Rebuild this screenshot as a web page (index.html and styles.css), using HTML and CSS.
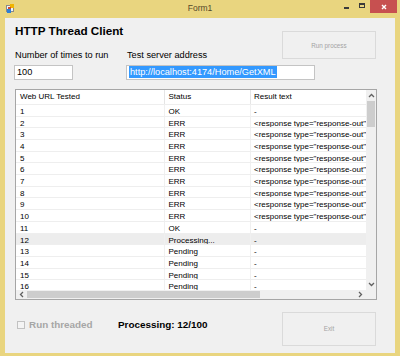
FILE: index.html
```html
<!DOCTYPE html>
<html lang="en">

<head>
    <meta charset="UTF-8">
    <meta name="viewport" content="width=device-width, initial-scale=1.0">
    <title>Form1</title>
    <link rel="stylesheet" href="styles.css">
</head>

<body>
    <div class="window">
        <div class="titlebar">
            <svg class="app-icon" width="9" height="9" viewBox="0 0 9 9">
                <rect x="0.5" y="1.5" width="7" height="6" fill="#f4f4f4" stroke="#8a8a8a"/>
                <rect x="4" y="0" width="4" height="4" fill="#f0b400"/>
                <rect x="2" y="3" width="3" height="2" fill="#d64a2a"/>
                <rect x="1" y="5" width="4" height="4" fill="#2d7fd6"/>
            </svg>
            <span class="title">Form1</span>
            <div class="controls">
                <span class="ctl ctl-min"></span>
                <span class="ctl ctl-max"></span>
                <span class="ctl-close">
                    <svg width="6" height="6" viewBox="0 0 6 6">
                        <path d="M1 1 L5 5 M5 1 L1 5" stroke="#fff" stroke-width="1.4"/>
                    </svg>
                </span>
            </div>
        </div>

        <div class="client">
            <div class="top">
                <h1>HTTP Thread Client</h1>
                <div class="fields">
                    <div class="field field-count">
                        <label for="count">Number of times to run</label>
                        <input type="text" id="count" class="textbox" value="100">
                    </div>
                    <div class="field field-url">
                        <label>Test server address</label>
                        <div class="textbox"><span class="selected">http://localhost:4174/Home/GetXML</span></div>
                    </div>
                </div>
                <button class="btn btn-run" disabled>Run process</button>
            </div>

            <div class="listview">
                <div class="list-body">
                    <div class="list-header">
                        <div class="cell c1">Web URL Tested</div>
                        <div class="cell c2">Status</div>
                        <div class="cell c3">Result text</div>
                    </div>
                    <div id="rows"></div>
                </div>
                <div class="vscroll">
                    <span class="arrow">
                        <svg width="7" height="5" viewBox="0 0 7 5"><path d="M1 4 L3.5 1.5 L6 4" fill="none" stroke="#606060" stroke-width="1.3"/></svg>
                    </span>
                    <span class="vthumb"></span>
                    <span class="vtrack"></span>
                    <span class="arrow">
                        <svg width="7" height="5" viewBox="0 0 7 5"><path d="M1 1 L3.5 3.5 L6 1" fill="none" stroke="#606060" stroke-width="1.3"/></svg>
                    </span>
                </div>
                <div class="hscroll">
                    <span class="arrow">
                        <svg width="5" height="7" viewBox="0 0 5 7"><path d="M4 1 L1.5 3.5 L4 6" fill="none" stroke="#606060" stroke-width="1.3"/></svg>
                    </span>
                    <span class="hthumb"></span>
                    <span class="htrack"></span>
                    <span class="arrow">
                        <svg width="5" height="7" viewBox="0 0 5 7"><path d="M1 1 L3.5 3.5 L1 6" fill="none" stroke="#606060" stroke-width="1.3"/></svg>
                    </span>
                </div>
                <div class="corner"></div>
            </div>

            <div class="bottom">
                <div class="bottom-left">
                    <span class="checkbox"></span>
                    <span class="check-label">Run threaded</span>
                    <span class="progress">Processing: 12/100</span>
                </div>
                <button class="btn btn-exit" disabled>Exit</button>
            </div>
        </div>
    </div>

    <script>
        // visible part of the response, the rest is scrolled out of view
        const response = '<response type="response-out"';
        const rows = [];
        for (let i = 1; i <= 16; i++) {
            let status = 'Pending';
            let result = '-';
            if (i === 1 || i === 11) {
                status = 'OK';
            } else if (i <= 10) {
                status = 'ERR';
                result = response;
            } else if (i === 12) {
                status = 'Processing...';
            }
            rows.push({ url: i, status: status, result: result });
        }

        const container = document.getElementById('rows');
        rows.forEach(function (row) {
            const div = document.createElement('div');
            div.className = 'list-row' + (row.status === 'Processing...' ? ' active' : '');
            [row.url, row.status, row.result].forEach(function (text, idx) {
                const cell = document.createElement('div');
                cell.className = 'cell c' + (idx + 1);
                cell.textContent = text;
                div.appendChild(cell);
            });
            container.appendChild(div);
        });
    </script>
</body>

</html>
```

FILE: styles.css
```css
* {
    box-sizing: border-box;
}

body {
    margin: 0;
    width: 400px;
    height: 356px;
    overflow: hidden;
    font-family: "Liberation Sans", Arial, sans-serif;
}

.window {
    width: 400px;
    height: 356px;
    background: #e9d57f;
    display: flex;
    flex-direction: column;
    padding: 0 5px 3px 5px;
}

/* title bar */
.titlebar {
    height: 18px;
    margin: 0 -5px;
    display: grid;
    grid-template-columns: 1fr auto 1fr;
    align-items: start;
}

.app-icon {
    margin: 4px 0 0 6px;
}

.title {
    font-size: 8.5px;
    line-height: 16px;
    color: #54492a;
}

.controls {
    justify-self: end;
    display: flex;
    align-items: flex-start;
    margin-right: 3px;
}

.ctl {
    display: block;
}

.ctl-min {
    width: 5px;
    height: 2px;
    background: #3a3a3a;
    margin: 7px 10px 0 0;
}

.ctl-max {
    width: 6px;
    height: 5px;
    border: 1px solid #3a3a3a;
    border-top-width: 2px;
    margin: 3px 5px 0 0;
}

.ctl-close {
    width: 27px;
    height: 13px;
    background: #c75050;
    display: flex;
    align-items: center;
    justify-content: center;
}

/* client area */
.client {
    flex: 1;
    background: #f0f0f0;
    padding: 6px 18px 0 10px;
    display: flex;
    flex-direction: column;
}

.top {
    display: grid;
    grid-template-columns: 1fr 94px;
    grid-template-rows: auto auto;
}

h1 {
    grid-column: 1;
    grid-row: 1;
    margin: 0;
    font-size: 11.7px;
    line-height: 13px;
    font-weight: bold;
    color: #000;
}

.fields {
    grid-column: 1 / -1;
    grid-row: 2;
    display: flex;
    margin-top: 12.7px;
}

.field {
    display: flex;
    flex-direction: column;
}

.field-count {
    width: 112px;
}

.field-url {
    width: 188px;
}

label {
    font-size: 9.2px;
    line-height: 11px;
    color: #000;
    margin-bottom: 4.3px;
}

.textbox {
    height: 15px;
    border: 1px solid #c4c4c4;
    background: #fff;
    font-family: "Liberation Sans", Arial, sans-serif;
    font-size: 9.2px;
    color: #000;
    padding: 0 2px;
    margin: 0 0 0 -1px;
    display: flex;
    align-items: center;
    outline: none;
}

.field-count .textbox {
    width: 59px;
}

.selected {
    background: #3399ff;
    color: #fff;
    line-height: 12px;
    padding: 0 1px;
}

.btn {
    width: 94px;
    background: #f0f0f0;
    border: 1px solid #dadada;
    color: #a3a3a3;
    font-family: "Liberation Sans", Arial, sans-serif;
    font-size: 6.3px;
    padding: 0;
}

.btn-run {
    grid-column: 2;
    grid-row: 1 / span 2;
    align-self: start;
    justify-self: end;
    height: 28px;
    margin: 7px 1px 0 0;
}

.btn-exit {
    height: 34px;
    margin-right: 1px;
}

/* list view */
.listview {
    margin-top: 9px;
    height: 211px;
    border: 1px solid #a6a6a6;
    background: #fff;
    display: grid;
    grid-template-columns: 350px 10px;
    grid-template-rows: 200px 9px;
    font-size: 8px;
    color: #000;
}

.list-body {
    overflow: hidden;
}

.list-header {
    display: flex;
    height: 14px;
    align-items: center;
}

.list-header .cell {
    height: 14px;
    line-height: 14px;
    border-right: 1px solid #e5e5e5;
}

.list-row {
    display: flex;
    height: 11.7px;
    border-top: 1px solid #eeeeee;
}

.list-row .cell {
    line-height: 11px;
    padding-top: 1px;
    border-right: 1px solid #f0f0f0;
}

.list-row.active {
    background: #ededed;
}

.cell {
    white-space: nowrap;
    overflow: hidden;
    padding-left: 3.5px;
}

.c1 {
    width: 149px;
    padding-left: 4px;
}

.c2 {
    width: 86px;
}

.c3 {
    width: 115px;
    padding-left: 3px;
}

.list-row .c3,
.list-header .c3 {
    border-right: none;
}

.vscroll {
    background: #f0f0f0;
    display: flex;
    flex-direction: column;
}

.vthumb {
    height: 26px;
    background: #cdcdcd;
    margin: 0 1px;
}

.vtrack {
    flex: 1;
}

.vscroll .arrow {
    height: 11px;
    display: flex;
    align-items: center;
    justify-content: center;
}

.hscroll {
    background: #f0f0f0;
    display: flex;
}

.hscroll .arrow {
    width: 11px;
    display: flex;
    align-items: center;
    justify-content: center;
}

.hthumb {
    width: 233px;
    background: #cdcdcd;
    margin: 1px 0;
}

.htrack {
    flex: 1;
}

.corner {
    background: #f0f0f0;
}

/* bottom */
.bottom {
    margin-top: 12px;
    display: flex;
    justify-content: space-between;
    align-items: flex-start;
}

.bottom-left {
    display: flex;
    align-items: center;
    height: 12px;
    margin-top: 7px;
    padding-left: 2px;
}

.checkbox {
    width: 8px;
    height: 8px;
    border: 1px solid #c2c2c2;
    background: #f4f4f4;
    margin-right: 4px;
}

.check-label {
    font-size: 9.9px;
    font-weight: bold;
    color: #a6a6a6;
    width: 89px;
}

.progress {
    font-size: 9.9px;
    font-weight: bold;
    color: #000;
}
```
